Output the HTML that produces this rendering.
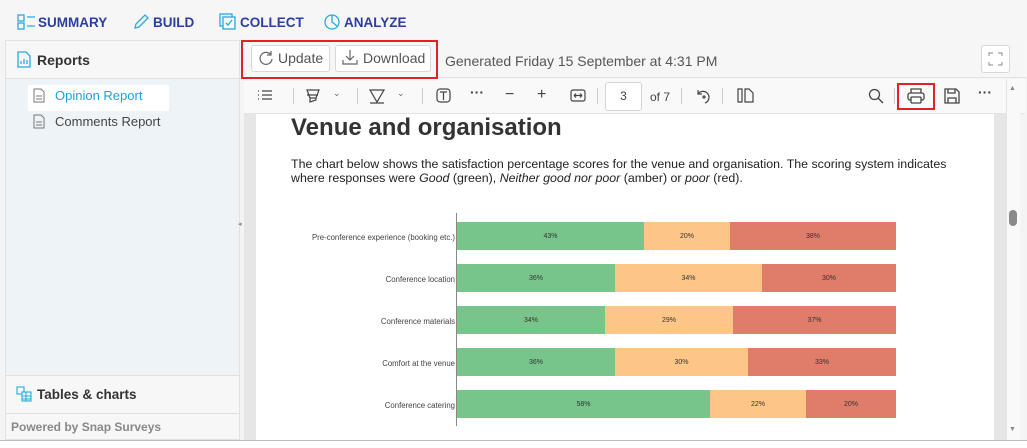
<!DOCTYPE html>
<html><head><style>
*{margin:0;padding:0;box-sizing:border-box}
body{width:1027px;height:448px;background:#f4f4f4;font-family:"Liberation Sans",sans-serif;position:relative;overflow:hidden}
.a{position:absolute}
.nav{font-weight:bold;color:#2c3e9e;font-size:13.5px;top:15px}
.bar{position:absolute;height:28px;font-size:7px;color:#333;display:flex;align-items:center;justify-content:center}
.g{background:#77c58b}.o{background:#fdc686}.r{background:#df7c6a}
.lbl{position:absolute;right:572px;font-size:7.8px;color:#444;text-align:right;white-space:nowrap}
.tb{color:#444;font-size:14px}
</style></head><body>
<div class="a" style="left:0;top:0;width:1027px;height:40px;background:#f6f6f6"></div>
<svg class="a" style="left:17px;top:14px" width="20" height="16" viewBox="0 0 20 16" fill="none" stroke="#29a9e0" stroke-width="1.3"><rect x="1" y="1" width="6" height="6"/><rect x="1" y="9" width="6" height="6"/><path d="M10 3h8M10 12h8"/></svg>
<div class="a nav" style="left:38px">SUMMARY</div>
<svg class="a" style="left:133px;top:14px" width="16" height="16" viewBox="0 0 16 16" fill="none" stroke="#29a9e0" stroke-width="1.3"><path d="M2 14l1-4 9-9 3 3-9 9z"/></svg>
<div class="a nav" style="left:153px">BUILD</div>
<svg class="a" style="left:219px;top:13px" width="18" height="18" viewBox="0 0 18 18" fill="none" stroke="#29a9e0" stroke-width="1.3"><rect x="1" y="1" width="12" height="12"/><rect x="4" y="4" width="12" height="12" fill="#f6f6f6"/><path d="M7 10l2 2 4-5"/></svg>
<div class="a nav" style="left:240px">COLLECT</div>
<svg class="a" style="left:324px;top:14px" width="16" height="16" viewBox="0 0 16 16" fill="none" stroke="#29a9e0" stroke-width="1.3"><circle cx="8" cy="8" r="7"/><path d="M8 1v7l5 4"/></svg>
<div class="a nav" style="left:344px">ANALYZE</div>

<div class="a" style="left:5px;top:40px;width:235px;height:400px;background:#f7f7f7;border:1px solid #e2e2e2"></div>
<svg class="a" style="left:17px;top:51px" width="14" height="17" viewBox="0 0 14 17" fill="none" stroke="#29a9e0" stroke-width="1.3"><path d="M1 1h8l4 4v11H1z"/><path d="M4 13V10M7 13V8M10 13v-4"/></svg>
<div class="a" style="left:37px;top:52px;font-size:14px;font-weight:bold;color:#333">Reports</div>
<div class="a" style="left:6px;top:78px;width:233px;height:297px;background:#eef3f7;border-top:1px solid #e0e0e0"></div>
<div class="a" style="left:28px;top:85px;width:141px;height:26px;background:#fff;border-radius:2px"></div>
<svg class="a" style="left:33px;top:88px" width="12" height="15" viewBox="0 0 12 15" fill="none" stroke="#777" stroke-width="1"><path d="M1 1h7l3 3v10H1z"/><path d="M3 11h6M3 8h6"/></svg>
<div class="a" style="left:55px;top:88px;font-size:13px;color:#1aa3d9">Opinion Report</div>
<svg class="a" style="left:33px;top:114px" width="12" height="15" viewBox="0 0 12 15" fill="none" stroke="#777" stroke-width="1"><path d="M1 1h7l3 3v10H1z"/><path d="M3 11h6M3 8h6"/></svg>
<div class="a" style="left:55px;top:114px;font-size:13px;color:#444">Comments Report</div>
<div class="a" style="left:6px;top:375px;width:233px;height:1px;background:#e0e0e0"></div>
<svg class="a" style="left:16px;top:386px" width="16" height="16" viewBox="0 0 16 16" fill="none" stroke="#29a9e0" stroke-width="1.1"><rect x="1" y="1" width="7" height="7"/><rect x="6" y="6" width="9" height="9" fill="#f7f7f7"/><path d="M6 10h9M6 13h9M10 6v9"/></svg>
<div class="a" style="left:37px;top:387px;font-size:13.5px;font-weight:bold;color:#333">Tables &amp; charts</div>
<div class="a" style="left:6px;top:413px;width:233px;height:1px;background:#e0e0e0"></div>
<div class="a" style="left:11px;top:420px;font-size:12px;font-weight:bold;color:#888">Powered by Snap Surveys</div>
<div class="a" style="left:238px;top:220px;font-size:7px;color:#888">◂</div>

<div class="a" style="left:241px;top:40px;width:785px;height:38px;background:#f6f6f6;border-bottom:1px solid #e2e2e2"></div>
<div class="a" style="left:241px;top:40px;width:197px;height:39px;border:2px solid #e0202a"></div>
<div class="a" style="left:251px;top:45px;width:79px;height:27px;background:#fff;border:1px solid #d8d8d8;border-radius:3px"></div>
<svg class="a" style="left:258px;top:50px" width="16" height="16" viewBox="0 0 16 16" fill="none" stroke="#666" stroke-width="1.2"><path d="M13 5A6 6 0 1 0 14 9"/><path d="M13 1v4H9"/></svg>
<div class="a" style="left:278px;top:50px;font-size:14px;color:#555">Update</div>
<div class="a" style="left:335px;top:45px;width:96px;height:27px;background:#fff;border:1px solid #d8d8d8;border-radius:3px"></div>
<svg class="a" style="left:342px;top:49px" width="16" height="16" viewBox="0 0 16 16" fill="none" stroke="#666" stroke-width="1.2"><path d="M8 1v10M4 7l4 4 4-4M1 11v4h14v-4"/></svg>
<div class="a" style="left:363px;top:50px;font-size:14px;color:#555">Download</div>
<div class="a" style="left:445px;top:53px;font-size:14px;color:#555">Generated Friday 15 September at 4:31 PM</div>
<div class="a" style="left:981px;top:45px;width:29px;height:28px;background:#fff;border:1px solid #d8d8d8;border-radius:3px"></div>
<svg class="a" style="left:988px;top:52px" width="15" height="14" viewBox="0 0 15 14" fill="none" stroke="#888" stroke-width="1"><path d="M1 4V1h4M10 1h4v3M14 10v3h-4M5 13H1v-3"/></svg>

<div class="a" style="left:244px;top:79px;width:781px;height:35px;background:#f9f9f9;border-bottom:1px solid #e4e4e4"></div>
<svg class="a" style="left:257px;top:89px" width="16" height="12" viewBox="0 0 16 12" stroke="#444" stroke-width="1.3"><path d="M1 2h1M1 6h1M1 10h1M5 2h10M5 6h10M5 10h10"/></svg>
<div class="a" style="left:293px;top:88px;width:1px;height:16px;background:#ccc"></div>
<svg class="a" style="left:306px;top:88px" width="14" height="16" viewBox="0 0 14 16" fill="none" stroke="#444" stroke-width="1.2"><path d="M1 2h12l-3 8H4zM1 7h11M4 10v4l6-2v-2"/></svg>
<div class="a tb" style="left:333px;top:88px;font-size:9px;color:#666">⌄</div>
<div class="a" style="left:357px;top:88px;width:1px;height:16px;background:#ccc"></div>
<svg class="a" style="left:369px;top:88px" width="16" height="16" viewBox="0 0 16 16" fill="none" stroke="#444" stroke-width="1.2"><path d="M1 2h14L8 14zM1 15h14"/></svg>
<div class="a tb" style="left:397px;top:88px;font-size:9px;color:#666">⌄</div>
<div class="a" style="left:422px;top:88px;width:1px;height:16px;background:#ccc"></div>
<svg class="a" style="left:436px;top:88px" width="15" height="15" viewBox="0 0 15 15" fill="none" stroke="#444" stroke-width="1.2"><rect x="1" y="1" width="13" height="13" rx="3"/><path d="M4 4h7M7.5 4v8"/></svg>
<div class="a tb" style="left:470px;top:84px;font-weight:bold">···</div>
<div class="a tb" style="left:505px;top:86px;font-size:16px">−</div>
<div class="a tb" style="left:537px;top:86px;font-size:16px">+</div>
<svg class="a" style="left:570px;top:89px" width="16" height="13" viewBox="0 0 16 13" fill="none" stroke="#444" stroke-width="1.2"><rect x="1" y="1" width="14" height="11" rx="2"/><path d="M4 6.5h8M4 6.5l2-2M4 6.5l2 2M12 6.5l-2-2M12 6.5l-2 2"/></svg>
<div class="a" style="left:597px;top:88px;width:1px;height:16px;background:#ccc"></div>
<div class="a" style="left:605px;top:82px;width:37px;height:29px;background:#fff;border:1px solid #d4d4d4;border-radius:3px;font-size:12px;color:#444;text-align:center;line-height:27px">3</div>
<div class="a" style="left:650px;top:90px;font-size:12px;color:#444">of 7</div>
<div class="a" style="left:681px;top:88px;width:1px;height:16px;background:#ccc"></div>
<svg class="a" style="left:695px;top:87px" width="18" height="18" viewBox="0 0 18 18" fill="none" stroke="#444" stroke-width="1.2"><path d="M3 7a6 6 0 1 1 7 9"/><path d="M3 3v4h4"/><circle cx="9" cy="10" r="1"/></svg>
<div class="a" style="left:722px;top:88px;width:1px;height:16px;background:#ccc"></div>
<svg class="a" style="left:737px;top:88px" width="17" height="15" viewBox="0 0 17 15" fill="none" stroke="#444" stroke-width="1.2"><path d="M1 1h4v13H1zM8 1h4l4 4v9H8z"/></svg>
<svg class="a" style="left:868px;top:88px" width="16" height="16" viewBox="0 0 16 16" fill="none" stroke="#444" stroke-width="1.3"><circle cx="6.5" cy="6.5" r="5"/><path d="M10 10l5 5"/></svg>
<div class="a" style="left:894px;top:88px;width:1px;height:16px;background:#ccc"></div>
<div class="a" style="left:897px;top:83px;width:38px;height:27px;border:2px solid #e0202a"></div>
<svg class="a" style="left:907px;top:88px" width="18" height="16" viewBox="0 0 18 16" fill="none" stroke="#444" stroke-width="1.3"><path d="M4 5V1h10v4"/><rect x="1" y="5" width="16" height="7" rx="2"/><rect x="4" y="9" width="10" height="6" rx="1" fill="#f9f9f9"/></svg>
<svg class="a" style="left:944px;top:88px" width="16" height="16" viewBox="0 0 16 16" fill="none" stroke="#444" stroke-width="1.3"><path d="M1 1h11l3 3v11H1z"/><path d="M4 1v4h7V1M4 15v-5h8v5"/></svg>
<div class="a tb" style="left:978px;top:84px;font-weight:bold">···</div>

<div class="a" style="left:244px;top:114px;width:762px;height:326px;background:#e6e6e6"></div>
<div class="a" style="left:256px;top:114px;width:738px;height:326px;background:#fff"></div>
<div class="a" style="left:1006px;top:79px;width:14px;height:361px;background:#f9f9f9;border-left:1px solid #e4e4e4"></div>
<div class="a" style="left:1009px;top:210px;width:8px;height:16px;background:#8a8a8a;border-radius:4px"></div>
<div class="a" style="left:1009px;top:85px;font-size:7px;color:#888">▲</div>
<div class="a" style="left:1009px;top:426px;font-size:7px;color:#888">▼</div>
<div class="a" style="left:0;top:440px;width:1027px;height:8px;background:#fff;border-top:1px solid #bbb"></div>

<div class="a" style="left:291px;top:114px;font-size:24px;font-weight:bold;color:#333">Venue and organisation</div>
<div class="a" style="left:291px;top:157px;width:675px;font-size:12.4px;line-height:14px;color:#222">The chart below shows the satisfaction percentage scores for the venue and organisation. The scoring system indicates where responses were <i>Good</i> (green), <i>Neither good nor poor</i> (amber) or <i>poor</i> (red).</div>

<div class="a" style="left:456px;top:213px;width:1px;height:213px;background:#888"></div>
<div class="lbl" style="top:233px">Pre-conference experience (booking etc.)</div>
<div class="lbl" style="top:275px">Conference location</div>
<div class="lbl" style="top:317px">Conference materials</div>
<div class="lbl" style="top:359px">Comfort at the venue</div>
<div class="lbl" style="top:401px">Conference catering</div>

<div class="bar g" style="left:457px;top:222px;width:187px">43%</div><div class="bar o" style="left:644px;top:222px;width:86px">20%</div><div class="bar r" style="left:730px;top:222px;width:166px">38%</div>
<div class="bar g" style="left:457px;top:264px;width:158px">36%</div><div class="bar o" style="left:615px;top:264px;width:147px">34%</div><div class="bar r" style="left:762px;top:264px;width:134px">30%</div>
<div class="bar g" style="left:457px;top:306px;width:148px">34%</div><div class="bar o" style="left:605px;top:306px;width:128px">29%</div><div class="bar r" style="left:733px;top:306px;width:163px">37%</div>
<div class="bar g" style="left:457px;top:348px;width:158px">36%</div><div class="bar o" style="left:615px;top:348px;width:133px">30%</div><div class="bar r" style="left:748px;top:348px;width:148px">33%</div>
<div class="bar g" style="left:457px;top:390px;width:253px">58%</div><div class="bar o" style="left:710px;top:390px;width:96px">22%</div><div class="bar r" style="left:806px;top:390px;width:90px">20%</div>
</body></html>
